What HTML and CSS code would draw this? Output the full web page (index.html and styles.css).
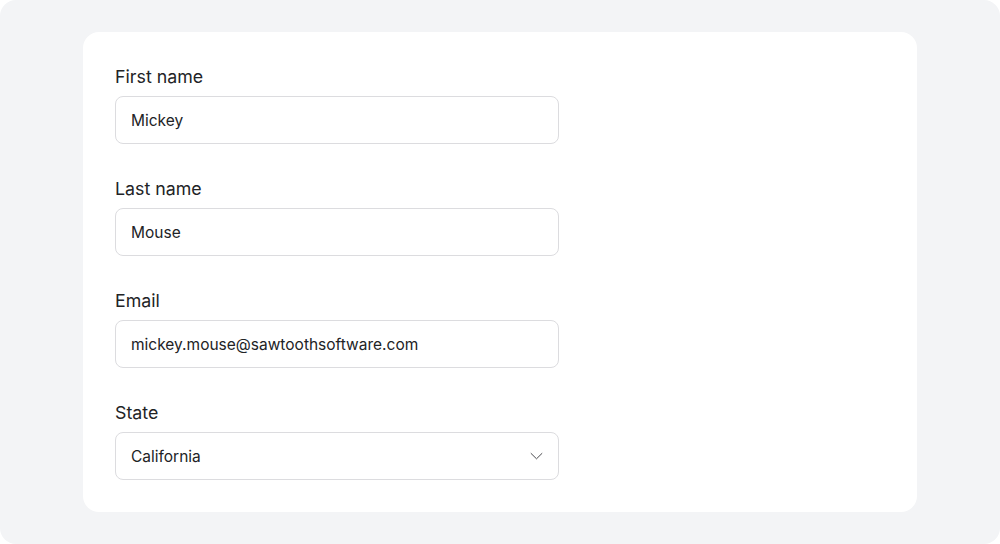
FILE: index.html
```html
<!DOCTYPE html>
<html lang="en">
<head>
<meta charset="utf-8">
<link rel="stylesheet" href="styles.css">
</head>
<body>
<div class="page">
  <form class="card">
    <div class="field">
      <label class="label">First name</label>
      <div class="input">Mickey</div>
    </div>
    <div class="field">
      <label class="label">Last name</label>
      <div class="input">Mouse</div>
    </div>
    <div class="field">
      <label class="label">Email</label>
      <div class="input">mickey.mouse@sawtoothsoftware.com</div>
    </div>
    <div class="field">
      <label class="label">State</label>
      <div class="input select">
        <span>California</span>
        <svg class="chevron" width="13" height="8" viewBox="0 0 13 8"><path d="M0.8 1.2 L6.5 6.8 L12.2 1.2" fill="none" stroke="#4a4a4e" stroke-width="1"/></svg>
      </div>
    </div>
  </form>
</div>
</body>
</html>
```

FILE: styles.css
```css
* { box-sizing: border-box; }
html, body { margin: 0; padding: 0; background: #ffffff; }
body { font-family: "Inter", "Liberation Sans", sans-serif; color: #222326; }
.page {
  width: 1000px;
  height: 544px;
  background: #f3f4f6;
  border-radius: 16px;
  padding-top: 32px;
}
.card {
  width: 834px;
  margin: 0 auto;
  background: #ffffff;
  border-radius: 16px;
  padding: 32px;
  display: flex;
  flex-direction: column;
  gap: 32px;
}
.field { display: flex; flex-direction: column; gap: 8px; }
.label { font-size: 17.8px; line-height: 25px; margin-bottom: -1px; color: #222326; }
.input {
  width: 444px;
  height: 48px;
  border: 1px solid #dcdcdf;
  border-radius: 8px;
  padding: 0 15px;
  display: flex;
  align-items: center;
  font-size: 15.5px;
  color: #222326;
}
.select { justify-content: space-between; padding-right: 15px; }
.chevron { display: block; }
```
